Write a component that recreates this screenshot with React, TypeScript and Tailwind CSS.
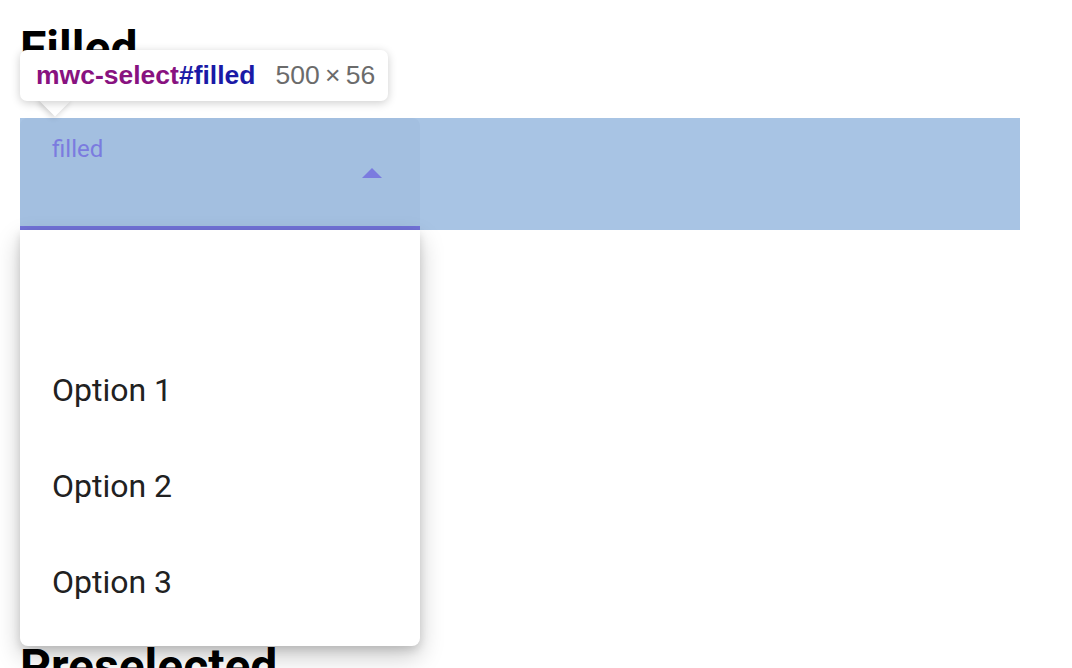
const options = ["", "Option 1", "Option 2", "Option 3"];

export default function App() {
  return (
    <div className="relative h-[668px] w-[1072px] overflow-hidden bg-white px-[20px] font-['Roboto','Liberation_Sans',sans-serif]">
      <h2 className="mt-[21px] text-[48px] font-bold leading-[56px] text-black">Filled</h2>

      {/* select with devtools highlight */}
      <div className="mt-[41px] flex h-[112px] w-[1000px] bg-[#a8c4e4]">
        <div className="relative flex w-[400px] flex-col rounded-t-[8px] bg-[#a3bfe0]">
          <span className="pl-[32px] pt-[17px] text-[24px] leading-[28px] text-[#7b7bdf]">filled</span>
          <svg
            className="absolute left-[342px] top-[50px]"
            width="20"
            height="10"
            viewBox="0 0 20 10"
          >
            <path d="M0 10 L10 0 L20 10 Z" fill="#7b7bdf" />
          </svg>
          <div className="mt-auto h-[4px] w-full bg-[#7272d8]" />
        </div>
      </div>

      <h2 className="mt-[409px] text-[48px] font-bold leading-[56px] text-black">Preselected</h2>

      {/* open menu */}
      <ul className="absolute left-[20px] top-[230px] w-[400px] rounded-b-[8px] bg-white py-[16px] shadow-[0_10px_24px_rgba(0,0,0,0.22),0_4px_8px_rgba(0,0,0,0.12)]">
        {options.map((o, i) => (
          <li
            key={i}
            className="flex h-[96px] items-center pl-[32px] text-[32px] text-[#212121]"
          >
            {o}
          </li>
        ))}
      </ul>

      {/* devtools tooltip */}
      <div className="absolute left-[20px] top-[50px] font-['Liberation_Sans',Arial,sans-serif]">
        <div className="absolute left-[24px] top-[40px] h-[22px] w-[22px] rotate-45 bg-white shadow-[0_2px_6px_rgba(0,0,0,0.2)]" />
        <div className="relative flex h-[51px] w-[368px] items-center rounded-[7px] bg-white pl-[16px] text-[26.5px] shadow-[0_2px_10px_rgba(0,0,0,0.2)]">
          <span className="font-bold text-[#881280]">mwc-select</span>
          <span className="font-bold text-[#1a1aa6]">#filled</span>
          <span className="ml-[20px] text-[#6b6b6b]">500{"\u2009×\u2009"}56</span>
        </div>
      </div>
    </div>
  );
}
